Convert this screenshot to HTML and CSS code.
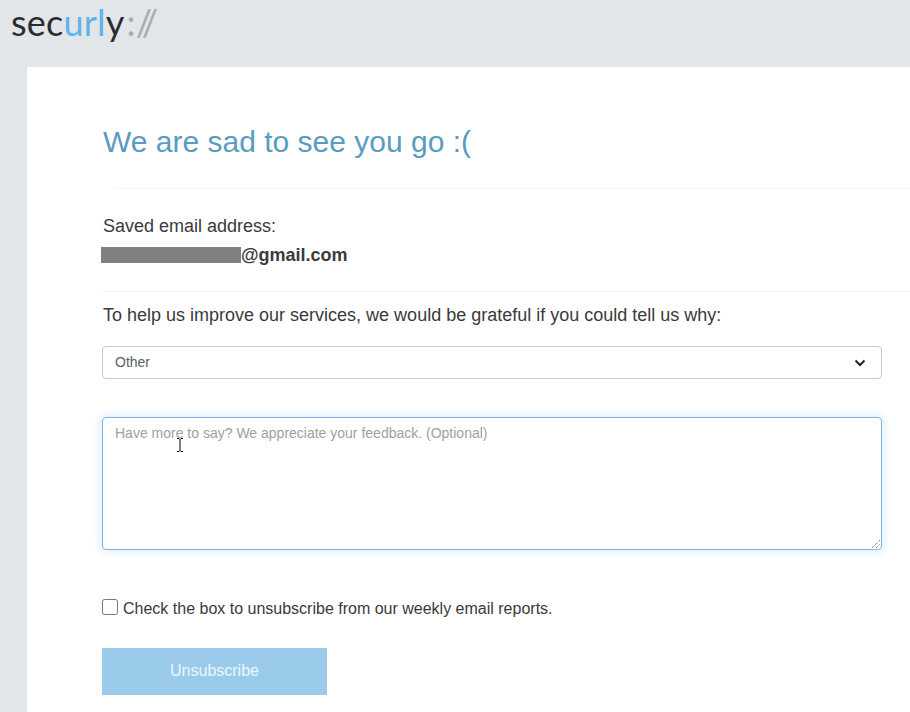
FILE: index.html
```html
<!DOCTYPE html>
<html lang="en">
<head>
    <meta charset="UTF-8">
    <title>Unsubscribe</title>
    <link rel="stylesheet" href="styles.css">
</head>
<body>
<header class="top">
    <div class="logo">sec<span class="logo-blue">url</span>y<span class="logo-grey">:<span class="logo-slash">//</span></span></div>
</header>
<main class="card">
    <h1 class="title">We are sad to see you go :(</h1>
    <hr class="rule rule-title">
    <p class="saved">Saved email address:</p>
    <p class="email"><span class="redact"></span>@gmail.com</p>
    <hr class="rule rule-email">
    <p class="why">To help us improve our services, we would be grateful if you could tell us why:</p>
    <div class="select">
        <span>Other</span>
        <svg class="chevron" width="12" height="8" viewBox="0 0 12 8"><path d="M1.5 1.5 L6 6 L10.5 1.5" fill="none" stroke="#222" stroke-width="2"/></svg>
    </div>
    <div class="feedback">
        <span class="placeholder">Have more to say? We appreciate your feedback. (Optional)</span>
        <svg class="grip" width="10" height="10" viewBox="0 0 10 10"><path d="M1 9 L9 1 M5 9 L9 5" stroke="#555" stroke-width="1" stroke-dasharray="1 1" fill="none"/></svg>
        <svg class="ibeam" width="8" height="14" viewBox="0 0 8 14"><path d="M1 .5 H3 L4 1.5 L5 .5 H7 M4 1.5 V12.5 M1 13.5 H3 L4 12.5 L5 13.5 H7" fill="none" stroke="#000" stroke-width="1"/></svg>
    </div>
    <label class="check">
        <input type="checkbox">
        <span>Check the box to unsubscribe from our weekly email reports.</span>
    </label>
    <button class="unsub">Unsubscribe</button>
</main>
</body>
</html>
```

FILE: styles.css
```css
*{
    margin: 0;
    padding: 0;
    box-sizing: border-box;
}
html, body{
    height: 712px;
    overflow: hidden;
}
body{
    background: #e3e6e8;
    font-family: "Liberation Sans", Arial, sans-serif;
    color: #3a3a3a;
}
.top{
    height: 67px;
    padding-left: 11px;
}
.logo{
    font-family: Lato, sans-serif;
    font-weight: 400;
    font-size: 36px;
    line-height: normal;
    letter-spacing: .2px;
    color: #2a2d30;
}
.logo-blue{
    color: #5fb4ea;
}
.logo-grey{
    color: #a9acae;
    margin-left: 2px;
}
.logo-slash{
    letter-spacing: -2px;
}
.card{
    margin-left: 27px;
    height: 645px;
    background: #ffffff;
    padding: 57px 28px 0 76px;
}
.title{
    font-weight: 400;
    font-size: 30px;
    line-height: 36px;
    color: #5a9bc2;
}
.rule{
    border: 0;
    height: 1px;
    background: #f1f2f3;
}
.rule-title{
    margin: 28px -28px 0 10px;
    background: #f4f5f6;
}
.saved{
    margin-top: 24px;
    font-size: 18px;
    line-height: 26px;
}
.email{
    margin-top: 3px;
    font-size: 18px;
    line-height: 26px;
    font-weight: 700;
    display: flex;
    align-items: center;
}
.redact{
    width: 140px;
    height: 16px;
    margin-left: -2px;
    background: #808080;
}
.rule-email{
    margin: 23px -28px 0 0;
}
.why{
    margin-top: 11px;
    font-size: 18px;
    line-height: 24px;
}
.select{
    margin: 19px 0 0 -1px;
    height: 33px;
    border: 1px solid #c8c8c8;
    border-radius: 4px;
    padding: 0 15px 2px 12px;
    display: flex;
    align-items: center;
    justify-content: space-between;
    font-size: 14px;
    color: #5a6066;
}
.chevron{
    margin-top: 2px;
}
.feedback{
    position: relative;
    margin: 38px 0 0 -1px;
    height: 133px;
    border: 1px solid #80b3e0;
    border-radius: 4px;
    box-shadow: 0 0 7px 3px rgba(128, 189, 255, .22);
    padding: 7px 12px;
    font-size: 14px;
    line-height: 17px;
}
.placeholder{
    color: #a0a0a0;
}
.grip{
    position: absolute;
    right: 0;
    bottom: 0;
}
.ibeam{
    position: absolute;
    left: 73px;
    top: 20px;
}
.check{
    margin: 49px 0 0 -1px;
    display: flex;
    align-items: center;
    gap: 5px;
    font-size: 16px;
    line-height: 20px;
}
.check input{
    width: 16px;
    height: 16px;
    margin: 0;
    position: relative;
    top: -2px;
}
.unsub{
    display: block;
    margin: 29px 0 0 -1px;
    width: 225px;
    height: 47px;
    padding-bottom: 2px;
    border: 0;
    background: #9bcbea;
    color: #eaf8ff;
    font-family: inherit;
    font-size: 16px;
}
```
